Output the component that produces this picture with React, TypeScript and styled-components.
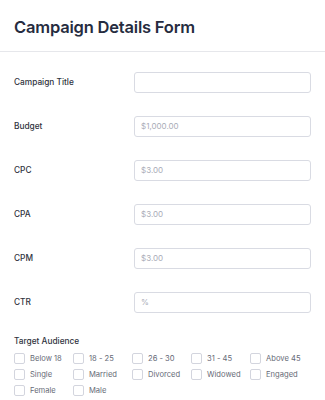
import styled, { createGlobalStyle } from "styled-components";

const GlobalStyle = createGlobalStyle`
  * {
    box-sizing: border-box;
  }
  body {
    margin: 0;
    background: #ffffff;
    font-family: Inter, "Noto Sans", sans-serif;
  }
`;

const Page = styled.div`
  width: 325px;
  display: flex;
  flex-direction: column;
`;

const Header = styled.div`
  padding: 15px 14px 12px;
  border-bottom: 1px solid #e6e7eb;
`;

const Title = styled.h1`
  margin: 0;
  font-size: 16.5px;
  line-height: 24px;
  font-weight: 600;
  letter-spacing: -0.2px;
  color: #262c40;
`;

const Form = styled.div`
  padding: 20px 14px 0;
  display: flex;
  flex-direction: column;
  gap: 24px;
`;

const Row = styled.div`
  display: flex;
  align-items: center;
  height: 20px;
`;

const Label = styled.label`
  width: 120px;
  font-size: 8.3px;
  color: #2f3340;
  font-weight: 500;
`;

const Input = styled.input`
  width: 177px;
  height: 21px;
  border: 1px solid #d9dbe3;
  border-radius: 3px;
  padding: 0 6px;
  font-family: inherit;
  font-size: 8px;
  color: #2f3340;
  outline: none;

  &::placeholder {
    color: #a9acb7;
  }
`;

const Audience = styled.div`
  margin-top: 24px;
  padding: 0 14px;
  display: flex;
  flex-direction: column;
`;

const AudienceTitle = styled.div`
  font-size: 8.3px;
  font-weight: 500;
  color: #2f3340;
  margin-bottom: 7px;
`;

const OptionGrid = styled.div`
  display: grid;
  grid-template-columns: repeat(5, 59px);
  row-gap: 5px;
`;

const Option = styled.label`
  display: flex;
  align-items: center;
  gap: 5px;
  font-size: 7.6px;
  color: #676b77;
  height: 11px;
`;

const Box = styled.span`
  width: 11px;
  height: 11px;
  border: 1px solid #d3d5de;
  border-radius: 2px;
  background: #fff;
  flex-shrink: 0;
`;

const fields = [
  { label: "Campaign Title", placeholder: "" },
  { label: "Budget", placeholder: "$1,000.00" },
  { label: "CPC", placeholder: "$3.00" },
  { label: "CPA", placeholder: "$3.00" },
  { label: "CPM", placeholder: "$3.00" },
  { label: "CTR", placeholder: "%" },
];

const options = [
  "Below 18",
  "18 - 25",
  "26 - 30",
  "31 - 45",
  "Above 45",
  "Single",
  "Married",
  "Divorced",
  "Widowed",
  "Engaged",
  "Female",
  "Male",
];

export default function App() {
  return (
    <>
      <GlobalStyle />
      <Page>
        <Header>
          <Title>Campaign Details Form</Title>
        </Header>
        <Form>
          {fields.map((f) => (
            <Row key={f.label}>
              <Label>{f.label}</Label>
              <Input placeholder={f.placeholder} />
            </Row>
          ))}
        </Form>
        <Audience>
          <AudienceTitle>Target Audience</AudienceTitle>
          <OptionGrid>
            {options.map((o) => (
              <Option key={o}>
                <Box />
                {o}
              </Option>
            ))}
          </OptionGrid>
        </Audience>
      </Page>
    </>
  );
}
